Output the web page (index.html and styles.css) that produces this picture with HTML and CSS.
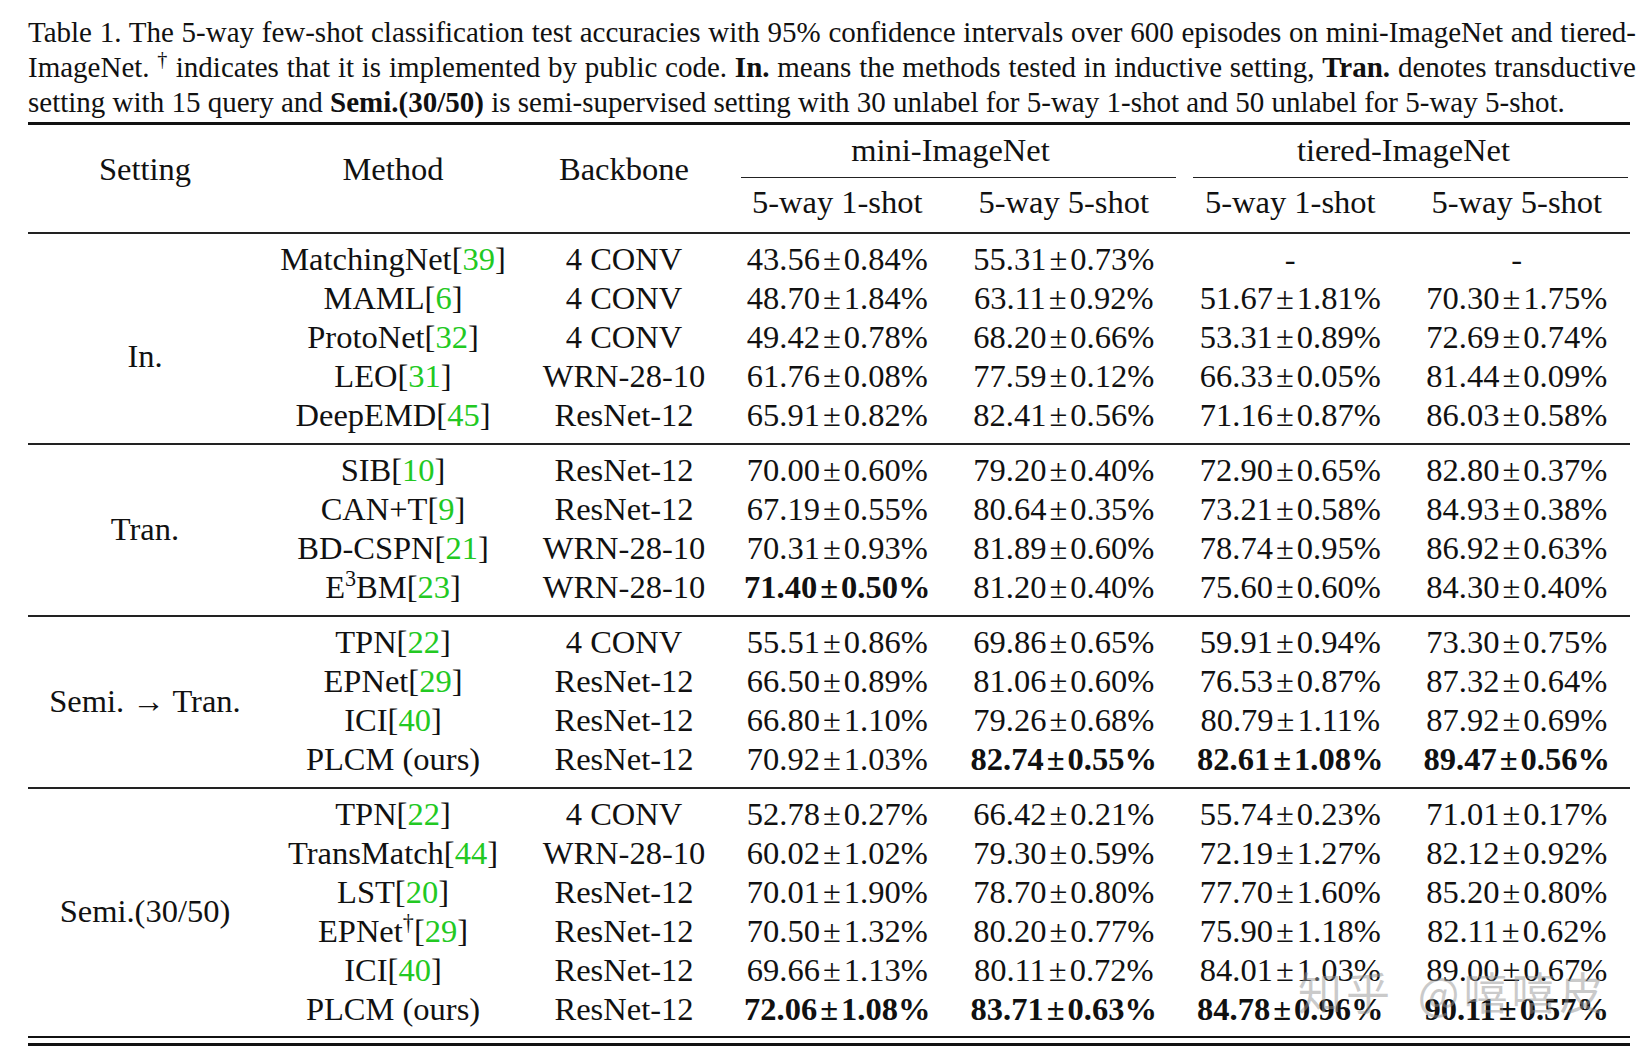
FILE: index.html
```html
<!DOCTYPE html>
<html>
<head>
<meta charset="utf-8">
<title>Table 1</title>
<link rel="stylesheet" href="styles.css">
</head>
<body>
<div class="page">
  <div class="caption">
    <p class="cline just">Table 1. The 5-way few-shot classification test accuracies with 95% confidence intervals over 600 episodes on mini-ImageNet and tiered-</p>
    <p class="cline just">ImageNet. <sup class="dag">†</sup> indicates that it is implemented by public code. <b>In.</b> means the methods tested in inductive setting, <b>Tran.</b> denotes transductive</p>
    <p class="cline">setting with 15 query and <b>Semi.(30/50)</b> is semi-supervised setting with 30 unlabel for 5-way 1-shot and 50 unlabel for 5-way 5-shot.</p>
  </div>

  <table class="results">
    <colgroup>
      <col class="c-setting">
      <col class="c-method">
      <col class="c-backbone">
      <col class="c-num">
      <col class="c-num">
      <col class="c-num">
      <col class="c-num">
    </colgroup>
    <thead>
      <tr class="h1">
        <th rowspan="2" class="hspan">Setting</th>
        <th rowspan="2" class="hspan">Method</th>
        <th rowspan="2" class="hspan">Backbone</th>
        <th colspan="2" class="grp">mini-ImageNet<div class="cmid mini"></div></th>
        <th colspan="2" class="grp">tiered-ImageNet<div class="cmid tiered"></div></th>
      </tr>
      <tr class="h2">
        <th>5-way 1-shot</th>
        <th>5-way 5-shot</th>
        <th>5-way 1-shot</th>
        <th>5-way 5-shot</th>
      </tr>
    </thead>

    <tbody>
      <tr>
        <td rowspan="5" class="setting in">In.</td>
        <td>MatchingNet[<span class="cite">39</span>]</td>
        <td>4 CONV</td>
        <td>43.56<span class="pm">±</span>0.84%</td>
        <td>55.31<span class="pm">±</span>0.73%</td>
        <td>-</td>
        <td>-</td>
      </tr>
      <tr>
        <td>MAML[<span class="cite">6</span>]</td>
        <td>4 CONV</td>
        <td>48.70<span class="pm">±</span>1.84%</td>
        <td>63.11<span class="pm">±</span>0.92%</td>
        <td>51.67<span class="pm">±</span>1.81%</td>
        <td>70.30<span class="pm">±</span>1.75%</td>
      </tr>
      <tr>
        <td>ProtoNet[<span class="cite">32</span>]</td>
        <td>4 CONV</td>
        <td>49.42<span class="pm">±</span>0.78%</td>
        <td>68.20<span class="pm">±</span>0.66%</td>
        <td>53.31<span class="pm">±</span>0.89%</td>
        <td>72.69<span class="pm">±</span>0.74%</td>
      </tr>
      <tr>
        <td>LEO[<span class="cite">31</span>]</td>
        <td>WRN-28-10</td>
        <td>61.76<span class="pm">±</span>0.08%</td>
        <td>77.59<span class="pm">±</span>0.12%</td>
        <td>66.33<span class="pm">±</span>0.05%</td>
        <td>81.44<span class="pm">±</span>0.09%</td>
      </tr>
      <tr>
        <td>DeepEMD[<span class="cite">45</span>]</td>
        <td>ResNet-12</td>
        <td>65.91<span class="pm">±</span>0.82%</td>
        <td>82.41<span class="pm">±</span>0.56%</td>
        <td>71.16<span class="pm">±</span>0.87%</td>
        <td>86.03<span class="pm">±</span>0.58%</td>
      </tr>
    </tbody>

    <tbody>
      <tr>
        <td rowspan="4" class="setting">Tran.</td>
        <td>SIB[<span class="cite">10</span>]</td>
        <td>ResNet-12</td>
        <td>70.00<span class="pm">±</span>0.60%</td>
        <td>79.20<span class="pm">±</span>0.40%</td>
        <td>72.90<span class="pm">±</span>0.65%</td>
        <td>82.80<span class="pm">±</span>0.37%</td>
      </tr>
      <tr>
        <td>CAN+T[<span class="cite">9</span>]</td>
        <td>ResNet-12</td>
        <td>67.19<span class="pm">±</span>0.55%</td>
        <td>80.64<span class="pm">±</span>0.35%</td>
        <td>73.21<span class="pm">±</span>0.58%</td>
        <td>84.93<span class="pm">±</span>0.38%</td>
      </tr>
      <tr>
        <td>BD-CSPN[<span class="cite">21</span>]</td>
        <td>WRN-28-10</td>
        <td>70.31<span class="pm">±</span>0.93%</td>
        <td>81.89<span class="pm">±</span>0.60%</td>
        <td>78.74<span class="pm">±</span>0.95%</td>
        <td>86.92<span class="pm">±</span>0.63%</td>
      </tr>
      <tr>
        <td>E<sup class="sup">3</sup>BM[<span class="cite">23</span>]</td>
        <td>WRN-28-10</td>
        <td class="best">71.40<span class="pm">±</span>0.50%</td>
        <td>81.20<span class="pm">±</span>0.40%</td>
        <td>75.60<span class="pm">±</span>0.60%</td>
        <td>84.30<span class="pm">±</span>0.40%</td>
      </tr>
    </tbody>

    <tbody>
      <tr>
        <td rowspan="4" class="setting">Semi. → Tran.</td>
        <td>TPN[<span class="cite">22</span>]</td>
        <td>4 CONV</td>
        <td>55.51<span class="pm">±</span>0.86%</td>
        <td>69.86<span class="pm">±</span>0.65%</td>
        <td>59.91<span class="pm">±</span>0.94%</td>
        <td>73.30<span class="pm">±</span>0.75%</td>
      </tr>
      <tr>
        <td>EPNet[<span class="cite">29</span>]</td>
        <td>ResNet-12</td>
        <td>66.50<span class="pm">±</span>0.89%</td>
        <td>81.06<span class="pm">±</span>0.60%</td>
        <td>76.53<span class="pm">±</span>0.87%</td>
        <td>87.32<span class="pm">±</span>0.64%</td>
      </tr>
      <tr>
        <td>ICI[<span class="cite">40</span>]</td>
        <td>ResNet-12</td>
        <td>66.80<span class="pm">±</span>1.10%</td>
        <td>79.26<span class="pm">±</span>0.68%</td>
        <td>80.79<span class="pm">±</span>1.11%</td>
        <td>87.92<span class="pm">±</span>0.69%</td>
      </tr>
      <tr>
        <td>PLCM (ours)</td>
        <td>ResNet-12</td>
        <td>70.92<span class="pm">±</span>1.03%</td>
        <td class="best">82.74<span class="pm">±</span>0.55%</td>
        <td class="best">82.61<span class="pm">±</span>1.08%</td>
        <td class="best">89.47<span class="pm">±</span>0.56%</td>
      </tr>
    </tbody>

    <tbody>
      <tr>
        <td rowspan="6" class="setting">Semi.(30/50)</td>
        <td>TPN[<span class="cite">22</span>]</td>
        <td>4 CONV</td>
        <td>52.78<span class="pm">±</span>0.27%</td>
        <td>66.42<span class="pm">±</span>0.21%</td>
        <td>55.74<span class="pm">±</span>0.23%</td>
        <td>71.01<span class="pm">±</span>0.17%</td>
      </tr>
      <tr>
        <td>TransMatch[<span class="cite">44</span>]</td>
        <td>WRN-28-10</td>
        <td>60.02<span class="pm">±</span>1.02%</td>
        <td>79.30<span class="pm">±</span>0.59%</td>
        <td>72.19<span class="pm">±</span>1.27%</td>
        <td>82.12<span class="pm">±</span>0.92%</td>
      </tr>
      <tr>
        <td>LST[<span class="cite">20</span>]</td>
        <td>ResNet-12</td>
        <td>70.01<span class="pm">±</span>1.90%</td>
        <td>78.70<span class="pm">±</span>0.80%</td>
        <td>77.70<span class="pm">±</span>1.60%</td>
        <td>85.20<span class="pm">±</span>0.80%</td>
      </tr>
      <tr>
        <td>EPNet<sup class="sup">†</sup>[<span class="cite">29</span>]</td>
        <td>ResNet-12</td>
        <td>70.50<span class="pm">±</span>1.32%</td>
        <td>80.20<span class="pm">±</span>0.77%</td>
        <td>75.90<span class="pm">±</span>1.18%</td>
        <td>82.11<span class="pm">±</span>0.62%</td>
      </tr>
      <tr>
        <td>ICI[<span class="cite">40</span>]</td>
        <td>ResNet-12</td>
        <td>69.66<span class="pm">±</span>1.13%</td>
        <td>80.11<span class="pm">±</span>0.72%</td>
        <td>84.01<span class="pm">±</span>1.03%</td>
        <td>89.00<span class="pm">±</span>0.67%</td>
      </tr>
      <tr>
        <td>PLCM (ours)</td>
        <td>ResNet-12</td>
        <td class="best">72.06<span class="pm">±</span>1.08%</td>
        <td class="best">83.71<span class="pm">±</span>0.63%</td>
        <td class="best">84.78<span class="pm">±</span>0.96%</td>
        <td class="best">90.11<span class="pm">±</span>0.57%</td>
      </tr>
    </tbody>
  </table>
  <div class="botrule"></div>

  <div class="watermark">知乎 @嘻嘻皮</div>
</div>
</body>
</html>
```

FILE: styles.css
```css
* {
  box-sizing: border-box;
  margin: 0;
  padding: 0;
}

html, body {
  background: #ffffff;
}

body {
  color: #111111;
  font-family: "Liberation Serif", "Times New Roman", "DejaVu Serif", serif;
}

.page {
  position: relative;
  width: 1644px;
  height: 1064px;
  padding: 15px 0 0 28px;
  overflow: hidden;
}

/* ---------- caption ---------- */
.caption {
  width: 1608px;
  font-size: 29px;
  line-height: 35px;
}

.cline {
  text-align: left;
}

.cline.just {
  text-align: justify;
  text-align-last: justify;
}

.caption b {
  font-weight: bold;
}

.dag {
  font-size: 0.7em;
  line-height: 0;
  vertical-align: 0.55em;
}

/* ---------- table ---------- */
.results {
  width: 1602px;
  table-layout: fixed;
  border-collapse: separate;
  border-spacing: 0;
  margin-top: 2px;
  border-top: 3px solid #111111;
  border-bottom: 2px solid #111111;
  font-size: 32.5px;
  line-height: 39px;
}

.c-setting { width: 234px; }
.c-method { width: 262px; }
.c-backbone { width: 200px; }
.c-num { width: 226.5px; }

.results th,
.results td {
  font-weight: normal;
  text-align: center;
  white-space: nowrap;
  vertical-align: middle;
  padding: 0;
}

.results .hspan {
  vertical-align: top;
  padding-top: 25px;
}

.results .grp {
  vertical-align: top;
  padding-top: 6px;
}

.cmid {
  height: 0;
  border-top: 1.5px solid #222222;
  margin-top: 7px;
}

.cmid.mini {
  margin-left: 17px;
  margin-right: 1px;
}

.cmid.tiered {
  margin-left: 16px;
  margin-right: 2px;
}

.results .h2 th {
  padding: 5px 0 10px;
}

.results tbody tr:first-child td {
  border-top: 2px solid #222222;
  padding-top: 6px;
}

.results tbody tr:last-child td {
  padding-bottom: 8px;
}

.results tbody:last-child tr:last-child td {
  padding-bottom: 7px;
}

.results td.setting {
  padding-bottom: 8px;
}

.results td.setting.in {
  padding-top: 44px;
}

.cite {
  color: #22c922;
}

.pm {
  margin: 0 3px;
}

.results td.best {
  font-weight: bold;
}

.sup {
  font-size: 0.68em;
  line-height: 0;
  vertical-align: 0.55em;
}

.botrule {
  width: 1602px;
  height: 0;
  margin-top: 5px;
  border-top: 3px solid #111111;
}

/* ---------- watermark overlay ---------- */
.watermark {
  position: absolute;
  left: 1298px;
  top: 963px;
  font-family: "Noto Sans CJK SC", "Noto Sans", sans-serif;
  font-size: 44px;
  line-height: 56px;
  letter-spacing: 4px;
  word-spacing: 10px;
  color: rgba(150, 150, 150, 0.5);
  white-space: nowrap;
  pointer-events: none;
}
```
